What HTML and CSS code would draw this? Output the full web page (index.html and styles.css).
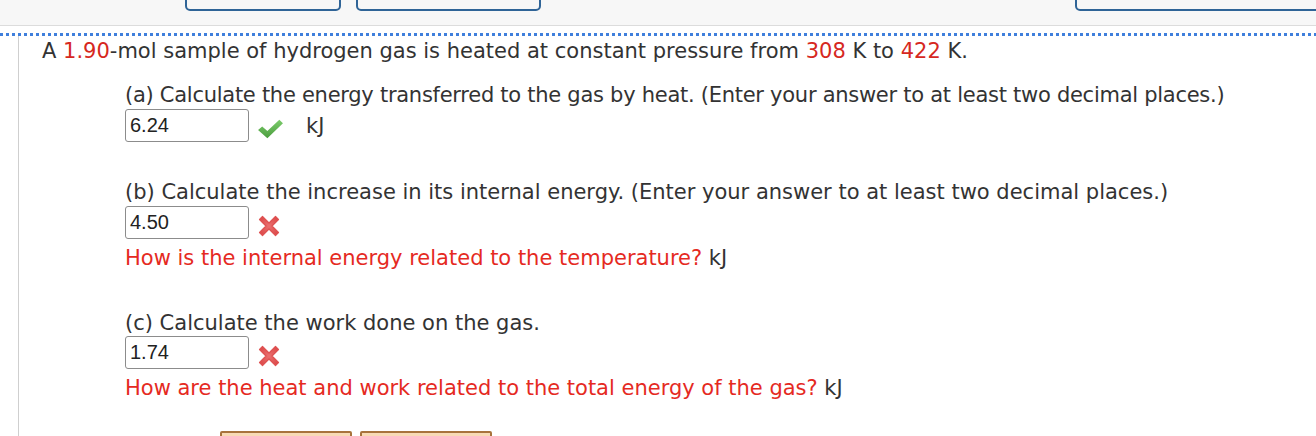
FILE: index.html
```html
<!DOCTYPE html>
<html>
<head>
<meta charset="utf-8">
<link rel="stylesheet" href="styles.css">
</head>
<body>
<div class="topbar">
  <div class="tb-btn tb-1"></div>
  <div class="tb-btn tb-2"></div>
  <div class="tb-btn tb-3"></div>
</div>
<div class="dots"></div>
<div class="content">
  <p class="intro">A <span class="num">1.90</span>-mol sample of hydrogen gas is heated at constant pressure from <span class="num">308</span> K to <span class="num">422</span> K.</p>

  <div class="part part-a">
    <p class="q q-tight">(a) Calculate the energy transferred to the gas by heat. (Enter your answer to at least two decimal places.)</p>
    <div class="answer">
      <span class="field">6.24</span>
      <svg class="icon-check" width="27" height="22" viewBox="0 0 26 21">
        <defs>
          <linearGradient id="g" x1="0" y1="0" x2="0" y2="1">
            <stop offset="0" stop-color="#7ccc6c"/>
            <stop offset="1" stop-color="#4b9d3e"/>
          </linearGradient>
        </defs>
        <path d="M1 11.5 L5 8 L10 12.5 L21.5 1.5 L25 5 L10 19.5 Z" fill="url(#g)"/>
      </svg>
      <span class="unit">kJ</span>
    </div>
  </div>

  <div class="part part-b">
    <p class="q">(b) Calculate the increase in its internal energy. (Enter your answer to at least two decimal places.)</p>
    <div class="answer">
      <span class="field">4.50</span>
      <svg class="icon-x" width="22" height="22" viewBox="0 0 22 22">
        <defs>
          <radialGradient id="r" cx="0.5" cy="0.5" r="0.6">
            <stop offset="0" stop-color="#ea6f6f"/>
            <stop offset="1" stop-color="#dc4a4a"/>
          </radialGradient>
        </defs>
        <path d="M1.5 4.5 L4.5 1.5 L11 8 L17.5 1.5 L20.5 4.5 L14 11 L20.5 17.5 L17.5 20.5 L11 14 L4.5 20.5 L1.5 17.5 L8 11 Z" fill="url(#r)" stroke="#df5252" stroke-width="1.2" stroke-linejoin="round"/>
      </svg>
    </div>
    <p class="hint"><span class="red">How is the internal energy related to the temperature?</span> kJ</p>
  </div>

  <div class="part part-c">
    <p class="q">(c) Calculate the work done on the gas.</p>
    <div class="answer">
      <span class="field">1.74</span>
      <svg class="icon-x" width="22" height="22" viewBox="0 0 22 22">
        <path d="M1.5 4.5 L4.5 1.5 L11 8 L17.5 1.5 L20.5 4.5 L14 11 L20.5 17.5 L17.5 20.5 L11 14 L4.5 20.5 L1.5 17.5 L8 11 Z" fill="url(#r)" stroke="#df5252" stroke-width="1.2" stroke-linejoin="round"/>
      </svg>
    </div>
    <p class="hint"><span class="red">How are the heat and work related to the total energy of the gas?</span> kJ</p>
  </div>

  <div class="actions">
    <div class="act-btn"></div>
    <div class="act-btn"></div>
  </div>
</div>
</body>
</html>
```

FILE: styles.css
```css
html, body {
  margin: 0;
  padding: 0;
  background: #ffffff;
  overflow: hidden;
}
body {
  width: 1316px;
  height: 436px;
  font-family: "DejaVu Sans", Verdana, sans-serif;
  font-size: 21px;
  color: #333333;
}
.topbar {
  height: 26px;
  background: #f7f7f7;
  border-bottom: 1px solid #dcdcdc;
  display: flex;
  align-items: flex-end;
  overflow: hidden;
  padding-left: 185px;
  box-sizing: border-box;
}
.tb-btn {
  height: 30px;
  margin-bottom: 14px;
  border: 2px solid #2f6497;
  border-radius: 5px;
  box-sizing: border-box;
  flex: none;
}
.tb-1 { width: 156px; }
.tb-2 { width: 185px; margin-left: 15px; }
.tb-3 { width: 300px; margin-left: 534px; }
.dots {
  height: 3px;
  margin-top: 7px;
  background: repeating-linear-gradient(to right, #3f7fdc 0 3px, transparent 3px 6px);
}
.content {
  margin-left: 18px;
  border-left: 1px solid #cfcfcf;
  padding-left: 23px;
  padding-top: 2px;
  height: 400px;
  box-sizing: border-box;
  overflow: hidden;
}
p { margin: 0; }
.intro, .q, .hint {
  line-height: 26px;
  white-space: nowrap;
}
.q-tight { letter-spacing: -0.27px; }
.num { color: #d6281e; }
.red { color: #e52a1f; }
.part {
  margin-left: 83px;
}
.part-a { margin-top: 18px; }
.part-a .answer { margin-top: 1px; }
.part-b { margin-top: 37px; }
.part-c { margin-top: 39px; }
.part-b .answer { margin-top: 1px; }
.answer {
  display: flex;
  align-items: center;
  height: 33px;
}
.field {
  width: 124px;
  height: 33px;
  box-sizing: border-box;
  border: 1px solid #8c8c8c;
  border-radius: 3px;
  font-family: "Liberation Sans", Arial, sans-serif;
  font-size: 20px;
  color: #222222;
  padding-left: 4px;
  line-height: 31px;
}
.icon-check {
  margin-left: 8px;
  margin-top: 6px;
}
.icon-x {
  margin-left: 9px;
  margin-top: 7px;
}
.unit {
  margin-left: 22px;
}
.hint { margin-top: 6px; }
.actions {
  display: flex;
  gap: 8px;
  margin-left: 178px;
  margin-top: 30px;
}
.act-btn {
  width: 132px;
  height: 30px;
  flex: none;
  box-sizing: border-box;
  border: 2px solid #a8733c;
  background: #f8dab5;
  border-radius: 2px;
}
```
